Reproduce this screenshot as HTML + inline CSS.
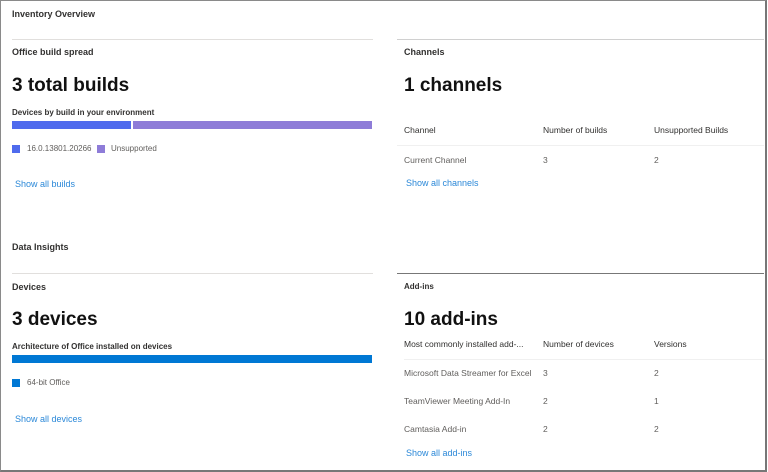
<!DOCTYPE html>
<html><head><style>
body{margin:0;width:768px;height:471px;background:#fff;font-family:"Liberation Sans",sans-serif;color:#323130;position:relative;overflow:hidden}
.a{position:absolute;white-space:nowrap}
.h{font-size:9px;font-weight:bold;color:#323130}
.big{font-size:19px;font-weight:bold;color:#111}
.t{font-size:8.5px;color:#605e5c}
.th{font-size:8.5px;color:#323130}
.l{font-size:9px;color:#2b88d8}
.ln{position:absolute;height:1px;background:#e1dfdd}
</style></head><body>
<div style="position:absolute;left:0;top:0;width:764px;height:469px;border:1px solid #8a8a8a;border-right:2px solid #777;border-bottom:2px solid #777"></div>
<div class="a h" style="left:12px;top:9px">Inventory Overview</div>
<div class="ln" style="left:12px;top:39px;width:361px"></div>
<div class="ln" style="left:397px;top:39px;width:367px;background:#d0d0d0"></div>
<div class="a h" style="left:12px;top:47px">Office build spread</div>
<div class="a big" style="left:12px;top:75px">3 total builds</div>
<div class="a h" style="left:12px;top:108px;font-size:8px">Devices by build in your environment</div>
<div class="a" style="left:12px;top:121px;width:119px;height:8px;background:#4f6bed"></div>
<div class="a" style="left:133px;top:121px;width:239px;height:8px;background:#8e7cd8"></div>
<div class="a" style="left:12px;top:145px;width:8px;height:8px;background:#4f6bed"></div>
<div class="a t" style="left:27px;top:144px;font-size:8px">16.0.13801.20266</div>
<div class="a" style="left:97px;top:145px;width:8px;height:8px;background:#8e7cd8"></div>
<div class="a t" style="left:111px;top:144px;font-size:8px">Unsupported</div>
<div class="a l" style="left:15px;top:179px">Show all builds</div>

<div class="a h" style="left:404px;top:47px">Channels</div>
<div class="a big" style="left:404px;top:75px">1 channels</div>
<div class="a th" style="left:404px;top:125px">Channel</div>
<div class="a th" style="left:543px;top:125px">Number of builds</div>
<div class="a th" style="left:654px;top:125px">Unsupported Builds</div>
<div class="ln" style="left:397px;top:145px;width:367px;background:#f0f0f0"></div>
<div class="a t" style="left:404px;top:155px">Current Channel</div>
<div class="a t" style="left:543px;top:155px">3</div>
<div class="a t" style="left:654px;top:155px">2</div>
<div class="a l" style="left:406px;top:178px">Show all channels</div>

<div class="a h" style="left:12px;top:242px">Data Insights</div>
<div class="ln" style="left:12px;top:273px;width:361px"></div>
<div class="ln" style="left:397px;top:273px;width:367px;background:#777"></div>
<div class="a h" style="left:12px;top:282px">Devices</div>
<div class="a big" style="left:12px;top:309px">3 devices</div>
<div class="a h" style="left:12px;top:342px;font-size:8px">Architecture of Office installed on devices</div>
<div class="a" style="left:12px;top:355px;width:360px;height:8px;background:#0078d4"></div>
<div class="a" style="left:12px;top:379px;width:8px;height:8px;background:#0078d4"></div>
<div class="a t" style="left:27px;top:378px;font-size:8px">64-bit Office</div>
<div class="a l" style="left:15px;top:414px">Show all devices</div>

<div class="a h" style="left:404px;top:282px;font-size:8px">Add-ins</div>
<div class="a big" style="left:404px;top:309px">10 add-ins</div>
<div class="a th" style="left:404px;top:339px">Most commonly installed add-...</div>
<div class="a th" style="left:543px;top:339px">Number of devices</div>
<div class="a th" style="left:654px;top:339px">Versions</div>
<div class="ln" style="left:404px;top:359px;width:360px;background:#f0f0f0"></div>
<div class="a t" style="left:404px;top:368px">Microsoft Data Streamer for Excel</div>
<div class="a t" style="left:543px;top:368px">3</div>
<div class="a t" style="left:654px;top:368px">2</div>
<div class="a t" style="left:404px;top:396px">TeamViewer Meeting Add-In</div>
<div class="a t" style="left:543px;top:396px">2</div>
<div class="a t" style="left:654px;top:396px">1</div>
<div class="a t" style="left:404px;top:424px">Camtasia Add-in</div>
<div class="a t" style="left:543px;top:424px">2</div>
<div class="a t" style="left:654px;top:424px">2</div>
<div class="a l" style="left:406px;top:448px">Show all add-ins</div>
</body></html>
